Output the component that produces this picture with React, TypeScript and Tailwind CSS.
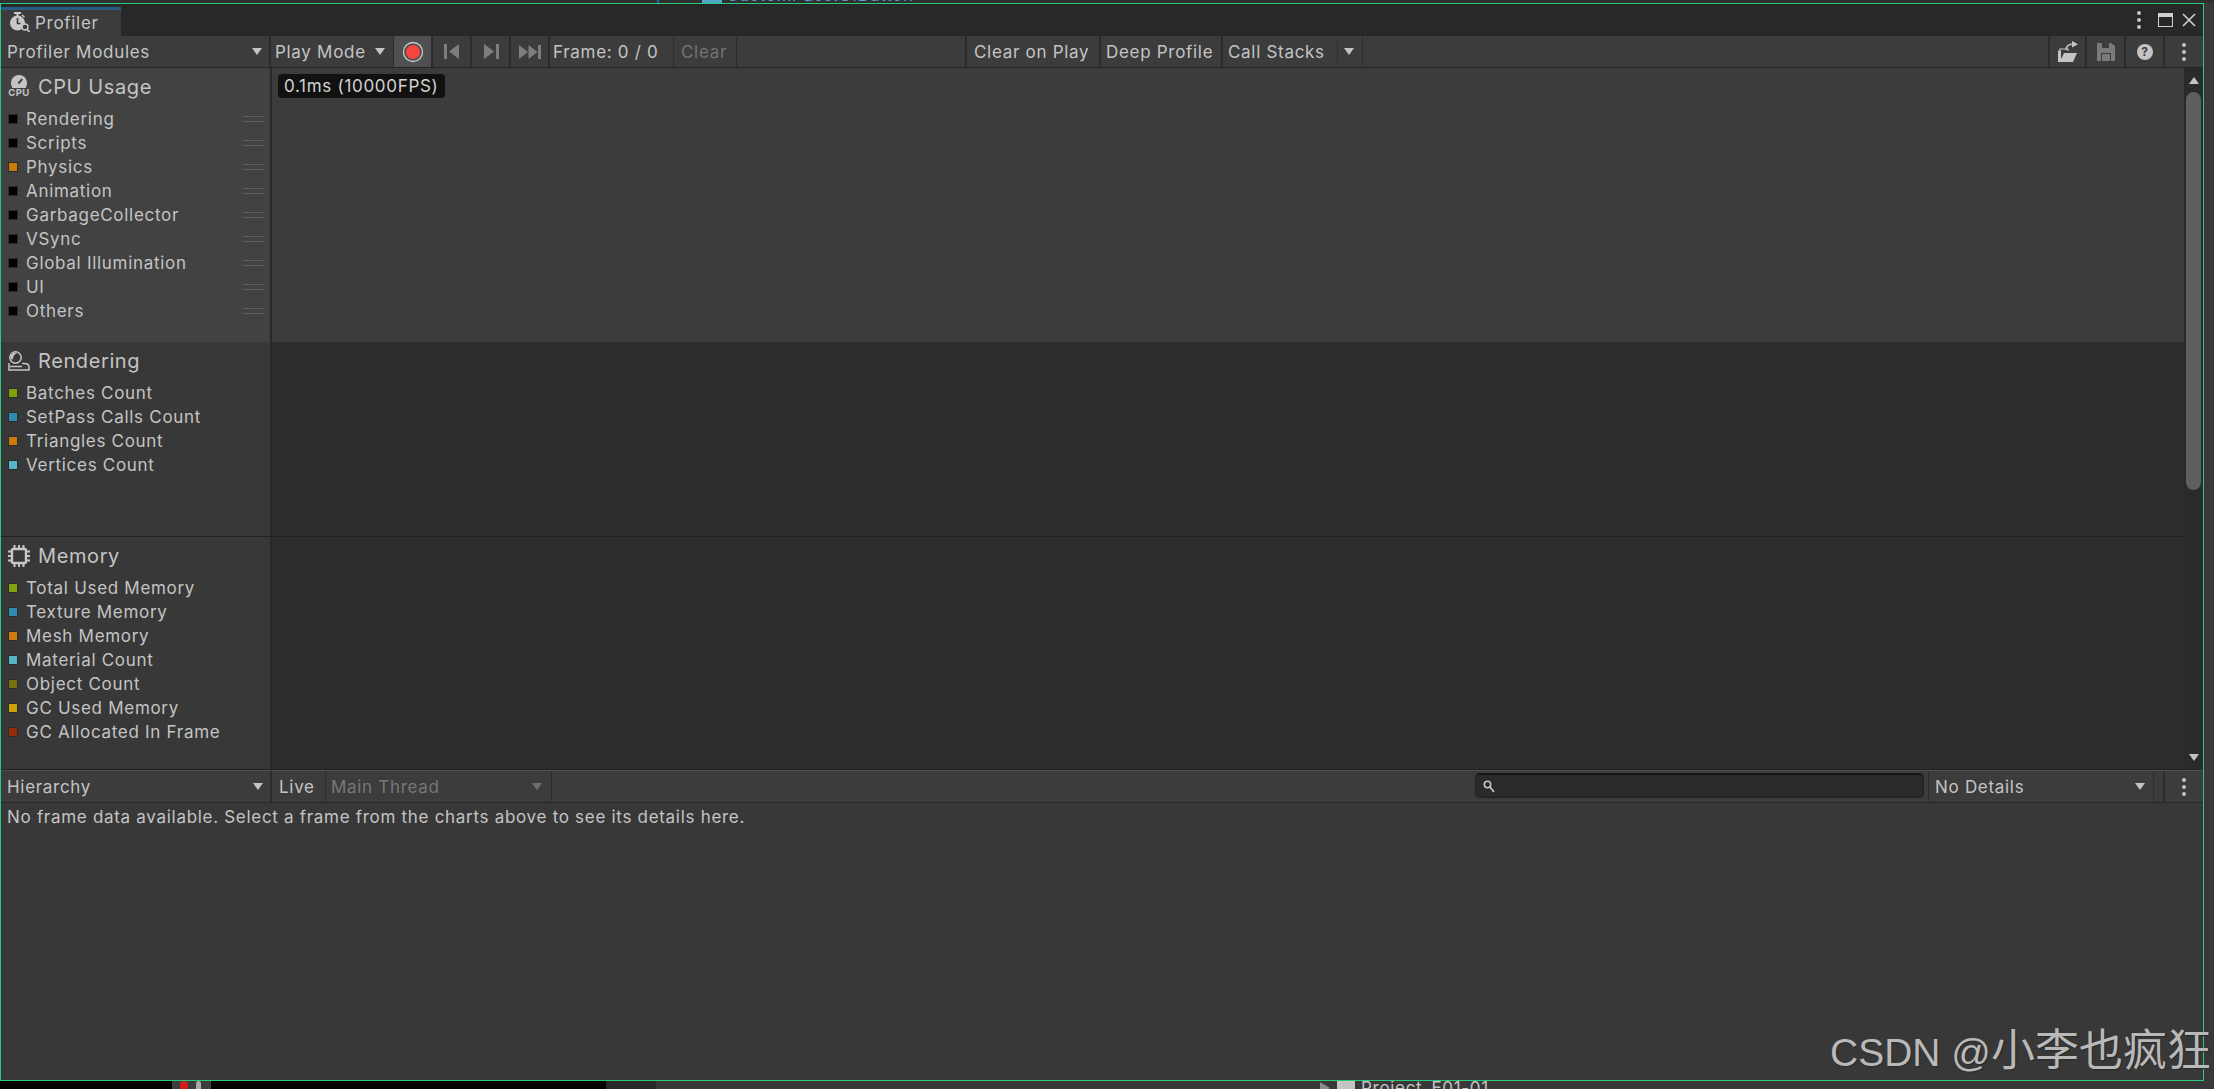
import type { ReactNode } from 'react';

const cpuRows: [string, string][] = [
  ['Rendering', 'bg-[#000000]'],
  ['Scripts', 'bg-[#000000]'],
  ['Physics', 'bg-[#c87a0a]'],
  ['Animation', 'bg-[#000000]'],
  ['GarbageCollector', 'bg-[#000000]'],
  ['VSync', 'bg-[#000000]'],
  ['Global Illumination', 'bg-[#000000]'],
  ['UI', 'bg-[#000000]'],
  ['Others', 'bg-[#000000]'],
];

const renderingRows: [string, string][] = [
  ['Batches Count', 'bg-[#7fa30c]'],
  ['SetPass Calls Count', 'bg-[#2f8ab0]'],
  ['Triangles Count', 'bg-[#d07a0c]'],
  ['Vertices Count', 'bg-[#56b6c6]'],
];

const memoryRows: [string, string][] = [
  ['Total Used Memory', 'bg-[#7fa30c]'],
  ['Texture Memory', 'bg-[#2f8ab0]'],
  ['Mesh Memory', 'bg-[#d07a0c]'],
  ['Material Count', 'bg-[#56b6c6]'],
  ['Object Count', 'bg-[#76700f]'],
  ['GC Used Memory', 'bg-[#c8a208]'],
  ['GC Allocated In Frame', 'bg-[#922c0a]'],
];

function Sep() {
  return <div className="w-[2px] h-full shrink-0 bg-[#2c2c2c]" />;
}

function Thin() {
  return <div className="w-px h-full shrink-0 bg-[#2e2e2e]" />;
}

function Arrow({ dim }: { dim?: boolean }) {
  return (
    <svg width="10" height="7" viewBox="0 0 10 7" className="shrink-0">
      <path d="M0 0h10L5 7z" fill={dim ? '#6f6f6f' : '#c4c4c4'} />
    </svg>
  );
}

function Dots() {
  return (
    <div className="flex flex-col items-center gap-[3px]">
      <div className="w-[4px] h-[4px] rounded-full bg-[#c4c4c4]" />
      <div className="w-[4px] h-[4px] rounded-full bg-[#c4c4c4]" />
      <div className="w-[4px] h-[4px] rounded-full bg-[#c4c4c4]" />
    </div>
  );
}

function StopwatchIcon() {
  return (
    <svg width="22" height="22" viewBox="0 0 22 22" className="shrink-0">
      <rect x="5" y="0" width="7" height="2" fill="#c8c8c8" />
      <rect x="7.5" y="1" width="2" height="3" fill="#c8c8c8" />
      <path d="M13.5 2.5l2.5 2.2-1 1-2.5-2.2z" fill="#c8c8c8" />
      <circle cx="8.5" cy="11" r="7.5" fill="#c8c8c8" />
      <path d="M8.5 6v5.5h3" fill="none" stroke="#3c3c3c" strokeWidth="1.6" />
      <circle cx="16" cy="15" r="3" fill="#3c3c3c" stroke="#c8c8c8" strokeWidth="1.4" />
      <path d="M18 17.2l2.6 2.8" stroke="#c8c8c8" strokeWidth="1.6" />
    </svg>
  );
}

function CpuIcon() {
  return (
    <div className="w-[22px] h-[24px] flex flex-col items-center shrink-0">
      <svg width="16" height="13" viewBox="0 0 16 13">
        <path d="M8 0a8 8 0 0 1 8 8c0 1.800-.5 3.400-1.400 5H1.400C.5 11.400 0 9.800 0 8a8 8 0 0 1 8-8z" fill="#c4c4c4" />
        <path d="M7.300 8.500l4-4.500" stroke="#424242" strokeWidth="2" />
      </svg>
      <span className="text-[9.5px] leading-[10px] font-bold tracking-[0.4px] text-[#c4c4c4]">CPU</span>
    </div>
  );
}

function SphereIcon() {
  return (
    <svg width="22" height="20" viewBox="0 0 22 20" className="shrink-0">
      <circle cx="7.500" cy="6.500" r="5.700" fill="none" stroke="#c4c4c4" strokeWidth="1.500" />
      <path d="M2.500 6.500a5 5 0 0 1 7-4.500c-2 .5-4.500 2.500-4.500 6.500-1.500 0-2.500-.8-2.500-2z" fill="#c4c4c4" />
      <path d="M1 12v7h20v-3c0-2-2-3.500-5-3.500h-2M14 15.500H2" fill="none" stroke="#c4c4c4" strokeWidth="1.500" />
    </svg>
  );
}

function ChipIcon() {
  return (
    <svg width="22" height="22" viewBox="0 0 22 22" className="shrink-0">
      <rect x="4" y="4" width="14" height="14" rx="1.500" fill="none" stroke="#c8c8c8" strokeWidth="2.400" />
      <path
        d="M6.500 0v3M11 0v3M15.500 0v3M6.500 19v3M11 19v3M15.500 19v3M0 6.500h3M0 11h3M0 15.500h3M19 6.500h3M19 11h3M19 15.500h3"
        stroke="#c8c8c8"
        strokeWidth="2"
      />
    </svg>
  );
}

function Row({ label, color }: { label: string; color: string }) {
  return (
    <div className="h-[24px] flex items-center pl-[7px] pr-[6px]">
      <div className="w-[10px] h-[10px] border border-[#2b2b2b] shrink-0">
        <div className={`w-full h-full ${color}`} />
      </div>
      <span className="ml-[8px] flex-1">{label}</span>
    </div>
  );
}

function Module({
  title,
  icon,
  rows,
  bg,
  chartBg,
  height,
  handles,
  children,
}: {
  title: string;
  icon: ReactNode;
  rows: [string, string][];
  bg: string;
  chartBg: string;
  height: string;
  handles?: boolean;
  children?: ReactNode;
}) {
  return (
    <div className={`flex ${height}`}>
      <div className={`w-[269px] shrink-0 pt-[7px] ${bg}`}>
        <div className="h-[24px] flex items-center pl-[7px] gap-[8px] mb-[8px] text-[20px] leading-[24px] tracking-[0.6px]">
          {icon}
          <span>{title}</span>
        </div>
        {rows.map(([label, color]) => (
          <div key={label} className="relative">
            <Row label={label} color={color} />
            {handles && (
              <div className="absolute right-[6px] top-[9px] w-[21px] h-[6px] border-y border-[#5e5e5e]" />
            )}
          </div>
        ))}
      </div>
      <div className="w-[2px] shrink-0 bg-[#282828]" />
      <div className={`flex-1 relative ${chartBg}`}>{children}</div>
    </div>
  );
}

function TopToolbar() {
  return (
    <div className="h-[31px] flex bg-[#3c3c3c] shrink-0">
      <div className="w-[268px] flex items-center justify-between pl-[6px] pr-[7px]">
        <span>Profiler Modules</span>
        <Arrow />
      </div>
      <Sep />
      <div className="w-[122px] flex items-center justify-between pl-[4px] pr-[8px]">
        <span>Play Mode</span>
        <Arrow />
      </div>
      <Thin />
      <div className="w-[37px] bg-[#505050] flex items-center justify-center">
        <svg width="22" height="22" viewBox="0 0 22 22">
          <circle cx="11" cy="11" r="9.500" fill="none" stroke="#c8c8c8" strokeWidth="1.300" />
          <circle cx="11" cy="11" r="7" fill="#f8443e" />
        </svg>
      </div>
      <Sep />
      <div className="w-[37px] flex items-center justify-center">
        <svg width="16" height="15" viewBox="0 0 16 15">
          <path d="M0 0h3v15H0zM15 0v15L5 7.500z" fill="#7d7d7d" />
        </svg>
      </div>
      <Sep />
      <div className="w-[37px] flex items-center justify-center">
        <svg width="16" height="15" viewBox="0 0 16 15">
          <path d="M13 0h3v15h-3zM1 0v15l10-7.500z" fill="#7d7d7d" />
        </svg>
      </div>
      <Sep />
      <div className="w-[37px] flex items-center justify-center">
        <svg width="22" height="14" viewBox="0 0 22 14">
          <path d="M0 0l9 7-9 7zM9.500 0l9 7-9 7zM19 0h3v14h-3z" fill="#7d7d7d" />
        </svg>
      </div>
      <Sep />
      <div className="w-[123px] flex items-center pl-[3px]">
        <span>Frame: 0 / 0</span>
      </div>
      <Thin />
      <div className="w-[62px] flex items-center pl-[7px] text-[#737373]">
        <span>Clear</span>
      </div>
      <Thin />
      <div className="flex-1" />
      <Sep />
      <div className="w-[132px] flex items-center pl-[7px]">
        <span>Clear on Play</span>
      </div>
      <Sep />
      <div className="w-[120px] flex items-center pl-[5px]">
        <span>Deep Profile</span>
      </div>
      <Sep />
      <div className="w-[139px] flex items-center pl-[5px]">
        <span className="w-[109px]">Call Stacks</span>
        <div className="w-px h-[22px] bg-[#2e2e2e] mr-[6px]" />
        <Arrow />
      </div>
      <Thin />
      <div className="w-[685px]" />
      <Sep />
      <div className="w-[35px] flex items-center justify-center">
        <svg width="22" height="22" viewBox="0 0 22 22">
          <path d="M1 10v11h15l4-9H7l-3 6V10z" fill="#c4c4c4" />
          <path d="M1 10h2v-2h8v2" fill="none" stroke="#c4c4c4" strokeWidth="1.200" />
          <path d="M9 9c0-4 3-6 8-6" fill="none" stroke="#c4c4c4" strokeWidth="1.600" />
          <path d="M15 0l6 3.200-6 3.200z" fill="#c4c4c4" />
        </svg>
      </div>
      <Sep />
      <div className="w-[37px] flex items-center justify-center">
        <svg width="18" height="18" viewBox="0 0 18 18">
          <path fillRule="evenodd" d="M0 0h14l4 3v15H0zM5 0v5h7V0zM4 10v8h10v-8z" fill="#7a7a7a" />
          <rect x="5" y="11" width="8" height="7" fill="#7a7a7a" />
        </svg>
      </div>
      <Sep />
      <div className="w-[37px] flex items-center justify-center">
        <div className="w-[16px] h-[16px] rounded-full bg-[#c4c4c4] flex items-center justify-center text-[#3c3c3c] text-[12px] tracking-normal leading-none font-bold">
          ?
        </div>
      </div>
      <Sep />
      <div className="w-[38px] flex items-center justify-center">
        <Dots />
      </div>
    </div>
  );
}

function BottomToolbar() {
  return (
    <div className="h-[31px] flex bg-[#3c3c3c] shrink-0">
      <div className="w-[269px] flex items-center justify-between pl-[6px] pr-[7px]">
        <span>Hierarchy</span>
        <Arrow />
      </div>
      <Sep />
      <div className="w-[53px] flex items-center pl-[7px]">
        <span>Live</span>
      </div>
      <Thin />
      <div className="w-[225px] flex items-center justify-between pl-[5px] pr-[9px] text-[#777777]">
        <span>Main Thread</span>
        <Arrow dim />
      </div>
      <Thin />
      <div className="flex-1" />
      <div className="w-[449px] my-[2px] h-[25px] rounded-[5px] bg-[#2a2a2a] border border-[#212121] border-t-2 border-t-[#151515] flex items-center pl-[7px] mr-[4px]">
        <svg width="12" height="13" viewBox="0 0 12 13">
          <circle cx="4.500" cy="4.500" r="3.200" fill="none" stroke="#c4c4c4" strokeWidth="1.600" />
          <path d="M7 7l4 5" stroke="#c4c4c4" strokeWidth="1.800" />
        </svg>
      </div>
      <Thin />
      <div className="w-[224px] flex items-center justify-between pl-[6px] pr-[8px]">
        <span>No Details</span>
        <Arrow />
      </div>
      <Thin />
      <div className="w-[9px]" />
      <Sep />
      <div className="w-[38px] flex items-center justify-center">
        <Dots />
      </div>
    </div>
  );
}

export default function App() {
  return (
    <div className="relative w-[2214px] h-[1089px] overflow-hidden bg-[#383838] flex flex-col text-[17px] tracking-[0.7px] leading-[20px] text-[#c4c4c4] font-[Inter,sans-serif]">
      {/* what shows of the editor behind the window, top edge */}
      <div className="h-[3px] bg-[#303030] flex overflow-hidden shrink-0">
        <div className="w-[657px]" />
        <div className="w-[2px] bg-[#0f6fa8]" />
        <div className="w-[43px]" />
        <div className="w-[20px] bg-[#4fa8c8]" />
        <span className="ml-[4px] -mt-[15px] text-[#5d9ad8] whitespace-nowrap">CustomPass.UIButton</span>
      </div>

      <div className="w-[2204px] h-[1078px] border border-[#2bc97e] flex flex-col shrink-0">
        {/* tab bar */}
        <div className="h-[32px] flex bg-[#282828] shrink-0">
          <div className="w-[120px] bg-[#3c3c3c] border-t-[3px] border-t-[#2a5a88] mt-[3px] flex items-center pl-[8px] gap-[4px]">
            <StopwatchIcon />
            <span>Profiler</span>
          </div>
          <div className="flex-1" />
          <div className="flex items-center pr-[7px]">
            <Dots />
            <div className="w-[15px] h-[14px] border border-[#d0d0d0] border-t-[4px] ml-[17px]" />
            <svg width="14" height="14" viewBox="0 0 14 14" className="ml-[9px]">
              <path d="M1 1l12 12M13 1L1 13" stroke="#d0d0d0" strokeWidth="1.600" />
            </svg>
          </div>
        </div>

        <TopToolbar />
        <div className="h-px bg-[#242424] shrink-0" />

        {/* charts */}
        <div className="flex h-[701px] shrink-0">
          <div className="flex-1 flex flex-col">
            <Module
              title="CPU Usage"
              icon={<CpuIcon />}
              rows={cpuRows}
              bg="bg-[#424242]"
              chartBg="bg-[#3c3c3c]"
              height="h-[274px]"
              handles
            >
              <div className="absolute left-[6px] top-[6px] h-[24px] px-[6px] rounded-[4px] bg-[#111111] flex items-center text-[#d2d2d2]">
                0.1ms (10000FPS)
              </div>
            </Module>
            <Module
              title="Rendering"
              icon={<SphereIcon />}
              rows={renderingRows}
              bg="bg-[#383838]"
              chartBg="bg-[#2d2d2d]"
              height="h-[194px]"
            />
            <div className="h-px bg-[#222222] shrink-0" />
            <Module
              title="Memory"
              icon={<ChipIcon />}
              rows={memoryRows}
              bg="bg-[#383838]"
              chartBg="bg-[#2d2d2d]"
              height="h-[232px]"
            />
          </div>
          <div className="w-[19px] shrink-0 bg-[#2a2a2a] flex flex-col items-center">
            <svg width="10" height="7" viewBox="0 0 10 7" className="mt-[9px]">
              <path d="M0 7h10L5 0z" fill="#c4c4c4" />
            </svg>
            <div className="w-[15px] h-[398px] mt-[8px] rounded-full bg-[#5f5f5f]" />
            <div className="flex-1" />
            <svg width="10" height="7" viewBox="0 0 10 7" className="mb-[8px]">
              <path d="M0 0h10L5 7z" fill="#c4c4c4" />
            </svg>
          </div>
        </div>

        <div className="h-px bg-[#222222] shrink-0" />
        <div className="h-px bg-[#505050] shrink-0" />
        <BottomToolbar />
        <div className="h-px bg-[#282828] shrink-0" />

        <div className="flex-1 bg-[#383838] pl-[6px] pt-[4px]">
          No frame data available. Select a frame from the charts above to see its details here.
        </div>
      </div>

      {/* editor behind the window, bottom edge */}
      <div className="flex-1 flex overflow-hidden">
        <div className="w-[172px] bg-[#000000]" />
        <div className="w-[39px] bg-[#3c3c3c] flex pl-[8px] gap-[8px]">
          <div className="w-[8px] h-[8px] bg-[#d81a1a] rounded-t-full" />
          <div className="w-[5px] h-[8px] bg-[#aaaaaa] rounded-t-full" />
        </div>
        <div className="w-[395px] bg-[#000000]" />
        <div className="w-[50px] bg-[#282828]" />
        <div className="flex-1 bg-[#383838] pl-[664px] flex items-start">
          <svg width="12" height="8" viewBox="0 0 12 8" className="shrink-0 mt-[1px]">
            <path d="M0 0l10 6-10 6z" fill="#8a8a8a" />
          </svg>
          <div className="w-[18px] h-[8px] bg-[#c4c4c4] ml-[5px] mr-[6px] shrink-0" />
          <span className="-mt-[3px] whitespace-nowrap">Project_E01-01</span>
        </div>
      </div>

      {/* watermark */}
      <div className="absolute left-[1830px] top-[1028px] text-[39px] leading-[46px] tracking-normal whitespace-nowrap text-[#b9b9b9] font-['Liberation_Sans','Noto_Sans_CJK_SC',sans-serif] [text-shadow:1px_1px_1px_#2a2a2a]">
        CSDN @<span className="text-[44px]">小李也疯狂</span>
      </div>
    </div>
  );
}
